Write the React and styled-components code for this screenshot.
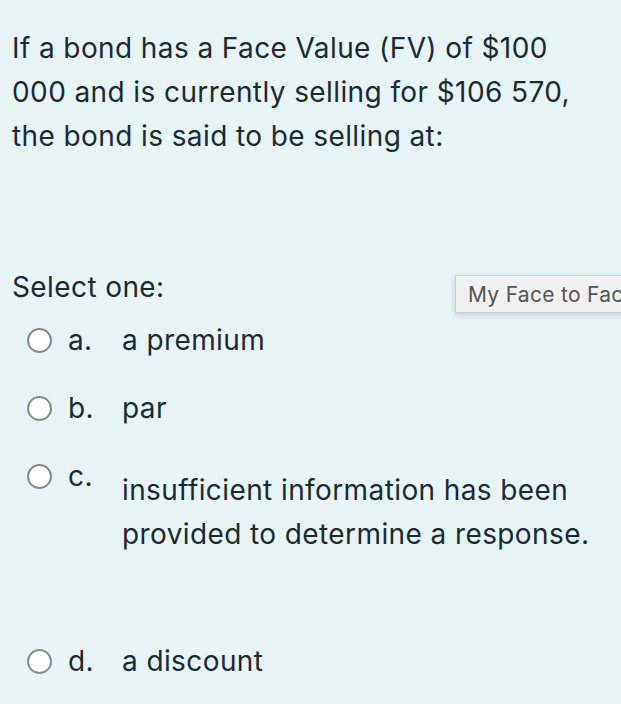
import React from "react";
import styled, { createGlobalStyle } from "styled-components";

const Global = createGlobalStyle`
  html, body { margin: 0; padding: 0; background: #e8f3f6; }
  body { font-family: Inter, "Noto Sans", sans-serif; color: #1b2a31; }
`;

const Page = styled.div`
  position: relative;
  padding: 26px 0 0 12px;
  width: 621px;
  height: 704px;
  box-sizing: border-box;
  overflow: hidden;
`;

const Text = `
  font-size: 28px;
  line-height: 44px;
  letter-spacing: 0.4px;
`;

const Question = styled.p`
  margin: 0;
  ${Text}
  width: 590px;
`;

const Prompt = styled.div`
  margin-top: 107px;
  ${Text}
`;

const Options = styled.div`
  margin-top: 9px;
  display: flex;
  flex-direction: column;
  gap: 24px;
`;

const Row = styled.label`
  display: flex;
  align-items: flex-start;
  ${Text}
`;

const Radio = styled.span`
  flex: none;
  width: 21px;
  height: 21px;
  margin: 10px 0 0 15px;
  border-radius: 50%;
  border: 2px solid #8a8a8a;
  background: #fff;
`;

const Letter = styled.span`
  flex: none;
  width: 54px;
  margin-left: 16px;
`;

const Answer = styled.span`
  padding-top: ${(p) => p.$top || 0}px;
  padding-bottom: ${(p) => p.$bottom || 0}px;
  width: 480px;
`;

const Tooltip = styled.div`
  position: absolute;
  left: 455px;
  top: 275px;
  height: 38px;
  padding: 0 12px;
  box-sizing: border-box;
  display: flex;
  align-items: center;
  white-space: nowrap;
  background: #f0f0f0;
  border: 1px solid #cfcfcf;
  box-shadow: 0 2px 6px rgba(0, 0, 0, 0.15);
  color: #555;
  font-size: 21px;
  letter-spacing: 0.3px;
`;

const options = [
  { l: "a.", t: "a premium" },
  { l: "b.", t: "par" },
  { l: "c.", t: "insufficient information has been provided to determine a response.", top: 14, bottom: 59 },
  { l: "d.", t: "a discount" },
];

export default function App() {
  return (
    <Page>
      <Global />
      <Question>
        If a bond has a Face Value (FV) of $100 000 and is currently selling for $106 570, the bond is said to be selling at:
      </Question>
      <Prompt>Select one:</Prompt>
      <Options>
        {options.map((o) => (
          <Row key={o.l}>
            <Radio />
            <Letter>{o.l}</Letter>
            <Answer $top={o.top} $bottom={o.bottom}>{o.t}</Answer>
          </Row>
        ))}
      </Options>
      <Tooltip>My Face to Face</Tooltip>
    </Page>
  );
}
